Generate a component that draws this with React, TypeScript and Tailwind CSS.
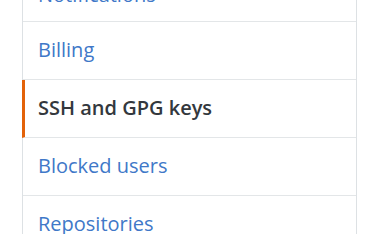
const items = [
  { label: "Notifications", active: false },
  { label: "Billing", active: false },
  { label: "SSH and GPG keys", active: true },
  { label: "Blocked users", active: false },
  { label: "Repositories", active: false },
];

export default function App() {
  return (
    <div className="h-[234px] w-[370px] overflow-hidden bg-white" style={{ fontFamily: '"Open Sans", "Noto Sans", sans-serif' }}>
      <nav className="ml-[22px] -mt-[32px] w-[335px] border-x border-[#dde1e4] bg-white">
        {items.map((item, i) => (
          <a
            key={item.label}
            href="#"
            className={
              item.active
                ? "-ml-px flex h-[58px] items-center border-b border-l-[3px] border-b-[#e3e6e8] border-l-[#e36209] pb-[2px] pl-[13px] text-[20px] font-semibold text-[#33383d]"
                : i === 0
                  ? "flex h-[54px] items-center border-b border-[#e3e6e8] pl-[15px] text-[20px] text-[#4078c8]"
                  : "flex h-[58px] items-center border-b border-[#e3e6e8] pb-[2px] pl-[15px] text-[20px] text-[#4078c8]"
            }
          >
            {item.label}
          </a>
        ))}
      </nav>
    </div>
  );
}
